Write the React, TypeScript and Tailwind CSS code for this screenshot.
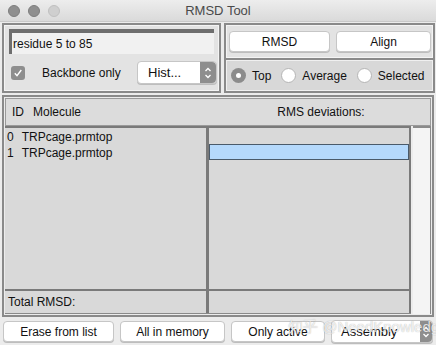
import React from "react";

const Stepper = ({ w = 16 }: { w?: number }) => (
  <div className="flex h-full shrink-0 items-center justify-center rounded-r-[4px] bg-[#8e8e8e]" style={{ width: w }}>
    <svg width="8" height="14" viewBox="0 0 8 14">
      <path d="M1.5 5 L4 2.5 L6.5 5" fill="none" stroke="#fff" strokeWidth="1.3" />
      <path d="M1.5 9 L4 11.5 L6.5 9" fill="none" stroke="#fff" strokeWidth="1.3" />
    </svg>
  </div>
);

const Radio = ({ on, label }: { on?: boolean; label: string }) => (
  <div className="flex shrink-0 items-center gap-[6px] whitespace-nowrap">
    <div
      className={
        "flex h-[15px] w-[15px] shrink-0 items-center justify-center rounded-full " +
        (on ? "bg-[#8c8c8c]" : "border border-[#b5b5b5] bg-white")
      }
    >
      {on && <div className="h-[5px] w-[5px] rounded-full bg-white" />}
    </div>
    <span>{label}</span>
  </div>
);

const Btn = ({ label, className }: { label: string; className?: string }) => (
  <div
    className={
      "flex h-[21px] shrink-0 items-center justify-center whitespace-nowrap rounded-[4px] border border-[#c6c6c6] bg-white shadow-[0_1px_0_#bdbdbd] " +
      (className || "")
    }
  >
    {label}
  </div>
);

export default function App() {
  return (
    <div
      className="relative flex h-[345px] w-[436px] flex-col overflow-hidden bg-[#ececec] text-[12px] text-[#111]"
      style={{ fontFamily: '"Liberation Sans", Arial, sans-serif' }}
    >
      {/* title bar */}
      <div className="relative flex h-[22px] items-center justify-center border-b border-[#c9c9c9] bg-gradient-to-b from-[#ededed] to-[#dadada]">
        <div className="absolute left-[8px] top-[5px] flex gap-[8px]">
          <div className="h-[12px] w-[12px] rounded-full border border-[#7d7d7d] bg-[#8f8f8f]" />
          <div className="h-[12px] w-[12px] rounded-full border border-[#7d7d7d] bg-[#8f8f8f]" />
          <div className="h-[12px] w-[12px] rounded-full border border-[#c0c0c0] bg-[#cfcfcf]" />
        </div>
        <span className="text-[13px] text-[#4a4a4a]">RMSD Tool</span>
      </div>

      {/* top section */}
      <div className="mt-[1px] flex gap-[3px] px-[2px]">
        {/* left frame */}
        <div className="flex h-[70px] w-[219px] shrink-0 flex-col border-2 border-[#8a8a8a] bg-[#e3e3e3] pl-[5px] pr-[2px] pt-[4px] shadow-[inset_0_0_0_1px_#f4f4f4]">
          <div className="mr-[3px] flex h-[25px] items-center border-l-[3px] border-t-[4px] border-[#6e6e6e] bg-[#f1f1f1] pl-[1px]">
            residue 5 to 85
          </div>
          <div className="mt-[7px] flex items-center whitespace-nowrap">
            <div className="ml-[2px] flex h-[14px] w-[14px] shrink-0 items-center justify-center rounded-[3px] bg-[#8e8e8e]">
              <svg width="10" height="10" viewBox="0 0 10 10">
                <path d="M1.8 5.2 L4 7.6 L8.3 2" fill="none" stroke="#fff" strokeWidth="1.4" />
              </svg>
            </div>
            <span className="ml-[17px] shrink-0">Backbone only</span>
            <div className="ml-auto flex h-[23px] w-[80px] shrink-0 items-center rounded-[4px] border border-[#c6c6c6] bg-white shadow-[0_1px_0_#bdbdbd]">
              <span className="flex-1 pl-[10px] text-[13px]">Hist...</span>
              <Stepper w={16} />
            </div>
          </div>
        </div>

        {/* right column */}
        <div className="flex w-[211px] shrink-0 flex-col">
          <div className="flex h-[37px] items-center gap-[6px] border-2 border-[#8a8a8a] bg-[#e3e3e3] px-[3px] shadow-[inset_0_0_0_1px_#f4f4f4]">
            <Btn label="RMSD" className="w-[101px]" />
            <Btn label="Align" className="w-[95px]" />
          </div>
          <div className="flex h-[33px] items-center gap-[10px] border-2 border-t-0 border-[#8a8a8a] bg-[#d8d8d8] px-[5px] shadow-[inset_0_0_0_1px_#f0f0f0]">
            <Radio on label="Top" />
            <Radio label="Average" />
            <Radio label="Selected" />
          </div>
        </div>
      </div>

      {/* main table frame */}
      <div className="mx-[2px] mt-[2px] flex h-[222px] flex-col border-2 border-[#8a8a8a] bg-[#ececec] p-[1px]">
        <div className="flex h-[28px] border border-[#9a9a9a] bg-[#dcdcdc]">
          <div className="flex w-[206px] items-center gap-[9px] pl-[6px]">
            <span>ID</span>
            <span>Molecule</span>
          </div>
          <div className="flex flex-1 items-center justify-center">RMS deviations:</div>
        </div>
        <div className="flex flex-1">
          <div className="flex flex-1 flex-col border-b border-[#8a8a8a]">
            <div className="flex flex-1">
              <div className="flex w-[204px] flex-col border-r-[3px] border-t-2 border-[#7a7a7a] bg-[#d9d9d9] pl-[2px] pt-[1px] leading-[16px]">
                <div className="flex gap-[8px]">
                  <span>0</span>
                  <span>TRPcage.prmtop</span>
                </div>
                <div className="flex gap-[8px]">
                  <span>1</span>
                  <span>TRPcage.prmtop</span>
                </div>
              </div>
              <div className="flex flex-1 flex-col border-r-2 border-t-2 border-[#7a7a7a] bg-[#d9d9d9] pt-[16px]">
                <div className="h-[16px] border border-[#4a5a6a] bg-[#b5d9fc]" />
              </div>
            </div>
            <div className="flex h-[24px] border-t-2 border-[#7a7a7a]">
              <div className="flex w-[204px] items-center border-r-[3px] border-[#7a7a7a] bg-[#d9d9d9] pl-[3px]">
                Total RMSD:
              </div>
              <div className="flex-1 border-r-2 border-[#7a7a7a] bg-[#d9d9d9]" />
            </div>
          </div>
          <div className="ml-[2px] w-[18px] border-r border-t-2 border-[#8a8a8a] bg-[#f4f4f4]" />
        </div>
      </div>

      {/* bottom buttons */}
      <div className="mt-[3px] flex items-center gap-[6px] px-[3px]">
        <Btn label="Erase from list" className="w-[111px]" />
        <Btn label="All in memory" className="w-[105px]" />
        <Btn label="Only active" className="w-[94px]" />
        <div className="flex h-[23px] w-[102px] shrink-0 items-center rounded-[4px] border border-[#c6c6c6] bg-white shadow-[0_1px_0_#bdbdbd]">
          <span className="flex-1 pl-[9px] text-[13px]">Assembly</span>
          <Stepper w={12} />
        </div>
      </div>

      {/* watermark */}
      <div className="pointer-events-none absolute left-[288px] top-[316px] whitespace-nowrap text-[15px] text-white/80 [text-shadow:0_0_1px_rgba(0,0,0,0.35)]">
        知乎 @NeedKnowledge
      </div>
    </div>
  );
}
